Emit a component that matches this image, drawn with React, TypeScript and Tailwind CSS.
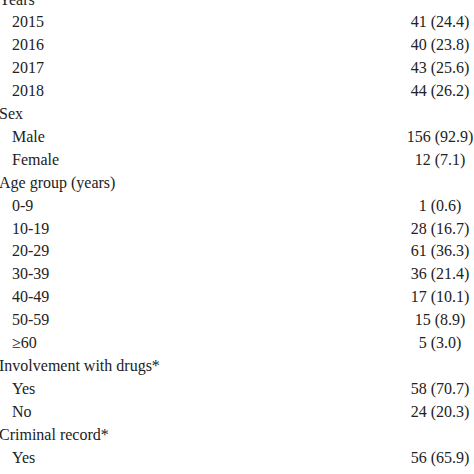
type Row = { label: string; value?: string; head?: boolean };

const rows: Row[] = [
  { label: 'Years', head: true },
  { label: '2015', value: '41 (24.4)' },
  { label: '2016', value: '40 (23.8)' },
  { label: '2017', value: '43 (25.6)' },
  { label: '2018', value: '44 (26.2)' },
  { label: 'Sex', head: true },
  { label: 'Male', value: '156 (92.9)' },
  { label: 'Female', value: '12 (7.1)' },
  { label: 'Age group (years)', head: true },
  { label: '0-9', value: '1 (0.6)' },
  { label: '10-19', value: '28 (16.7)' },
  { label: '20-29', value: '61 (36.3)' },
  { label: '30-39', value: '36 (21.4)' },
  { label: '40-49', value: '17 (10.1)' },
  { label: '50-59', value: '15 (8.9)' },
  { label: '≥60', value: '5 (3.0)' },
  { label: 'Involvement with drugs*', head: true },
  { label: 'Yes', value: '58 (70.7)' },
  { label: 'No', value: '24 (20.3)' },
  { label: 'Criminal record*', head: true },
  { label: 'Yes', value: '56 (65.9)' },
  { label: 'No', value: '29 (34.1)' },
];

export default function App() {
  return (
    <div className="w-[474px] h-[474px] overflow-hidden bg-white">
      <div className="w-[481px] mt-[-11.5px] ml-[-1px] font-['Liberation_Serif',serif] text-[16px] leading-[22.9px] text-[#222]">
        {rows.map((row, i) => (
          <div key={i} className="grid grid-cols-[1fr_80px] whitespace-nowrap">
            <span className={row.head ? '' : 'pl-[13px]'}>{row.label}</span>
            <span className="text-center">{row.value ?? ''}</span>
          </div>
        ))}
      </div>
    </div>
  );
}
